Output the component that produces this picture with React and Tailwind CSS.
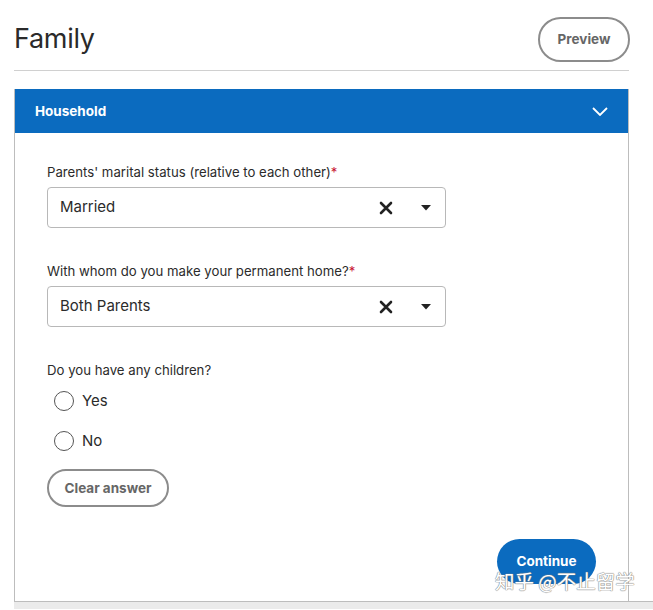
import React from "react";

function Select({ value }) {
  return (
    <div className="flex h-[41px] w-[399px] items-center rounded-[4px] border border-[#b8b8b8] pl-[12px] pr-[14px]">
      <span className="flex-1 text-[15px] text-[#2b2b2b]">{value}</span>
      <svg width="14" height="14" viewBox="0 0 14 14" className="mr-[28px]">
        <path d="M2 2 L12 12 M12 2 L2 12" stroke="#222" strokeWidth="2.6" strokeLinecap="round" />
      </svg>
      <svg width="10" height="6" viewBox="0 0 10 6">
        <path d="M0 0 L10 0 L5 5.5 Z" fill="#222" />
      </svg>
    </div>
  );
}

function Label({ children, required }) {
  return (
    <div className="h-[20px] text-[13.2px] leading-[20px] text-[#2b2b2b]">
      {children}
      {required && <span className="text-[#c8102e]">*</span>}
    </div>
  );
}

function Radio({ label }) {
  return (
    <div className="flex h-[40px] items-center pl-[7px]">
      <span className="h-[20px] w-[20px] rounded-full border-[1.5px] border-[#555]" />
      <span className="ml-[8px] text-[15px] text-[#2b2b2b]">{label}</span>
    </div>
  );
}

export default function App() {
  return (
    <div className="relative min-h-[610px] bg-white" style={{ fontFamily: "Inter, 'Noto Sans', sans-serif" }}>
      <div className="ml-[14px] w-[615px]">
        <div className="flex h-[71px] items-center justify-between border-b border-[#d0d0d0] pt-[8px]">
          <h1 className="text-[27px] font-normal tracking-[-0.3px] text-[#2a2a2a]">Family</h1>
          <button className="mr-[-1px] h-[45px] w-[92px] rounded-full border-2 border-[#8c8c8c] text-[13.5px] font-bold text-[#666]">
            Preview
          </button>
        </div>
        <div className="mt-[18px] border-x border-[#bdbdbd]">
          <div className="flex h-[44px] items-center justify-between bg-[#0b6bbf] pl-[20px] pr-[20px]">
            <span className="text-[13.5px] font-bold text-white">Household</span>
            <svg width="16" height="9" viewBox="0 0 16 9">
              <path d="M1 1 L8 8 L15 1" fill="none" stroke="white" strokeWidth="1.8" />
            </svg>
          </div>
          <div className="flex flex-col px-[32px] pt-[29px] pb-[17px]">
            <Label required>Parents' marital status (relative to each other)</Label>
            <div className="mt-[5px]">
              <Select value="Married" />
            </div>
            <div className="mt-[33px]">
              <Label required>With whom do you make your permanent home?</Label>
            </div>
            <div className="mt-[5px]">
              <Select value="Both Parents" />
            </div>
            <div className="mt-[33px]">
              <Label>Do you have any children?</Label>
            </div>
            <div className="mt-[1px]">
              <Radio label="Yes" />
              <Radio label="No" />
            </div>
            <button className="mt-[8px] h-[38px] w-[122px] rounded-full border-2 border-[#8c8c8c] text-[13.5px] font-bold text-[#666]">
              Clear answer
            </button>
            <div className="mt-[32px] flex justify-end">
              <button className="h-[45px] w-[99px] rounded-full bg-[#0b6bbf] text-[13.5px] font-bold text-white">
                Continue
              </button>
            </div>
          </div>
        </div>
      </div>
      <div className="ml-[14px] h-[8px] border-t border-[#bdbdbd] bg-[#ebebeb]" />
      <div
        className="absolute left-[495px] top-[566px] text-[19.5px] text-white"
        style={{
          fontFamily: "'Noto Sans CJK SC', sans-serif",
          textShadow: "0 0 1px #888, 0 0 1px #888, 0 0 1px #888",
        }}
      >
        知乎 @不止留学
      </div>
    </div>
  );
}
